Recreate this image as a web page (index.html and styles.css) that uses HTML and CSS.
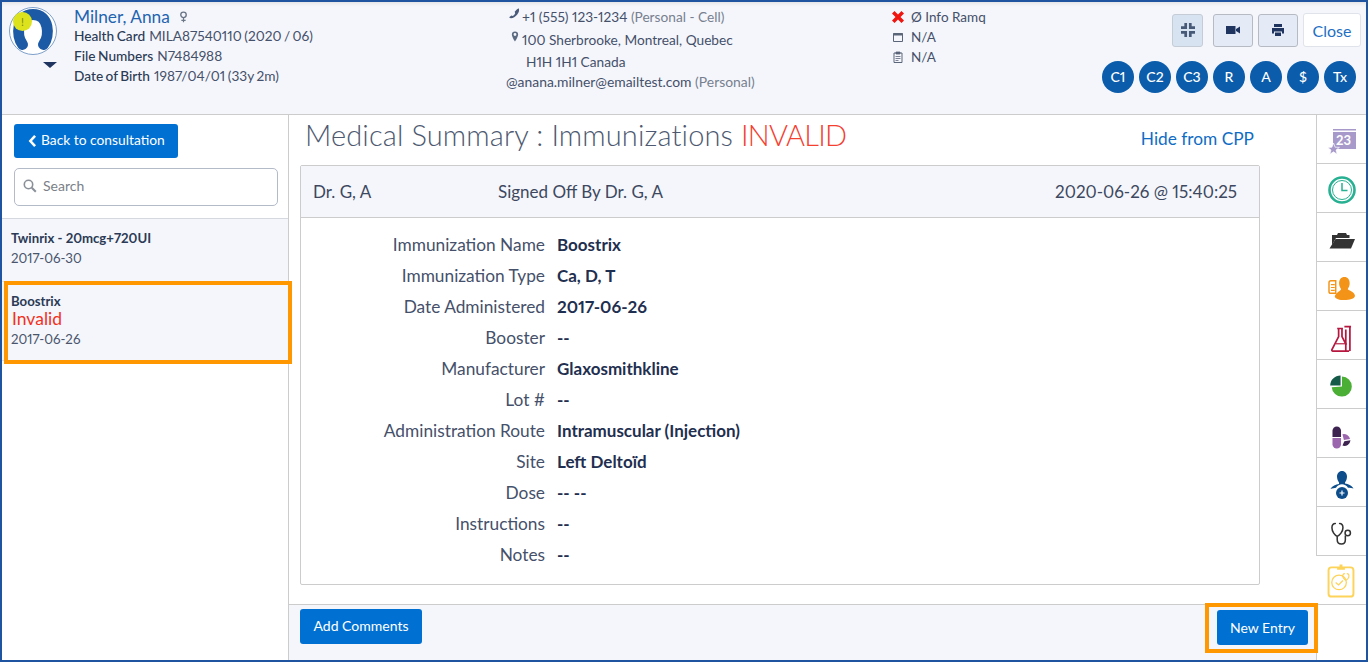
FILE: index.html
```html
<!DOCTYPE html>
<html lang="en">
<head>
<meta charset="utf-8">
<title>Medical Summary : Immunizations</title>
<link rel="stylesheet" href="styles.css">
</head>
<body>
<div class="frame">
  <header class="top">
    <div class="avatar-col">
      <div class="avatar">
        <svg viewBox="0 0 48 48" width="48" height="48"><circle cx="24" cy="24" r="23.500" fill="#fff" stroke="#7d9fc9"/><path d="M13.500 37.500C7 29 7.500 7.500 24 7.500S41 29 34.500 37.500" fill="none" stroke="#1d5aa6" stroke-width="11" stroke-linecap="round"/></svg>
        <span class="alert">!</span>
      </div>
      <span class="caret"></span>
    </div>
    <div class="patient">
      <div class="name">Milner, Anna <svg class="female" viewBox="0 0 10 14" width="9" height="12"><circle cx="5" cy="4.500" r="3.200" fill="none" stroke="#6b7687" stroke-width="1.600"/><path d="M5 8v5M2.500 11h5" stroke="#6b7687" stroke-width="1.400"/></svg></div>
      <div class="line"><b>Health Card</b> MILA87540110 (2020 / 06)</div>
      <div class="line"><b>File Numbers</b> N7484988</div>
      <div class="line"><b>Date of Birth</b> 1987/04/01 (33y 2m)</div>
    </div>
    <div class="contact">
      <div class="line"><svg class="ci" viewBox="0 0 12 12" width="11" height="11"><path d="M10.500 .3c1 1.700.5 4.500-1.500 6.800S4.400 11.200 2.200 11.200c-.9 0-1.600-.4-2-1l2.400-2 1.400.6c1.200-.7 2.200-1.900 2.800-3.200l-.6-1.500L8.500 1.500z" fill="#4a5a78"/></svg>+1 (555) 123-1234 <span class="muted">(Personal - Cell)</span></div>
      <div class="line addr"><svg class="ci pin" viewBox="0 0 10 14" width="8" height="11"><path d="M5 .5a4 4 0 0 1 4 4c0 3-4 9-4 9s-4-6-4-9a4 4 0 0 1 4-4zm0 2.200a1.800 1.800 0 1 0 0 3.600 1.800 1.800 0 0 0 0-3.600z" fill="#5c6a82"/></svg>100 Sherbrooke, Montreal, Quebec</div>
      <div class="line indent">H1H 1H1 Canada</div>
      <div class="line email">@anana.milner@emailtest.com <span class="muted">(Personal)</span></div>
    </div>
    <div class="ramq">
      <div class="rline"><svg viewBox="0 0 12 12" width="12" height="12"><path d="M0 2.500 2.500 0 6 3.500 9.500 0 12 2.500 8.500 6 12 9.500 9.500 12 6 8.500 2.500 12 0 9.500 3.500 6z" fill="#f0150f"/></svg><span>Ø Info Ramq</span></div>
      <div class="rline"><svg viewBox="0 0 12 12" width="12" height="12"><path d="M1.500 2.500h9v8h-9z" fill="none" stroke="#5a6578"/><path d="M1.500 2h9v2.500h-9z" fill="#5a6578"/></svg><span>N/A</span></div>
      <div class="rline"><svg viewBox="0 0 12 12" width="12" height="12"><path d="M2 2h8v9.500H2z" fill="none" stroke="#5a6578"/><path d="M4 1h4v2H4zM3.500 5.500h5M3.500 7.500h5M3.500 9.500h3" stroke="#5a6578" fill="#5a6578" stroke-width=".8"/></svg><span>N/A</span></div>
    </div>
    <div class="actions">
      <div class="tools">
        <button class="tool tool-on"><svg viewBox="0 0 14 14" width="14" height="14"><path d="M4.700 0V4.700H0M9.300 0V4.700H14M0 9.300H4.700V14M14 9.300H9.300V14" fill="none" stroke="#465a78" stroke-width="2.700"/></svg></button>
        <button class="tool"><svg viewBox="0 0 14 10" width="14" height="10"><path d="M0 1h9.500v8H0zM10 4l4-2.500v7L10 6z" fill="#1f3560"/></svg></button>
        <button class="tool"><svg viewBox="0 0 14 14" width="14" height="14"><path d="M3 1h8v3H3zM1 5h12v5.500h-2V8.500H3v2H1zM4 9.500h6V13H4z" fill="#1f3560"/></svg></button>
        <button class="close">Close</button>
      </div>
      <div class="circles">
        <span class="circle">C1</span><span class="circle">C2</span><span class="circle">C3</span><span class="circle">R</span><span class="circle">A</span><span class="circle">$</span><span class="circle">Tx</span>
      </div>
    </div>
  </header>

  <div class="body">
    <aside class="side">
      <div class="side-top">
        <button class="btn back"><svg viewBox="0 0 10 14" width="9" height="12"><path d="M8 1 2.500 7 8 13" fill="none" stroke="#fff" stroke-width="3"/></svg>Back to consultation</button>
        <div class="search"><svg viewBox="0 0 14 14" width="14" height="14"><circle cx="5.500" cy="5.500" r="4.200" fill="none" stroke="#8a8f98" stroke-width="1.600"/><path d="m8.800 8.800 4 4" stroke="#8a8f98" stroke-width="2"/></svg><span>Search</span></div>
      </div>
      <ul class="list">
        <li class="item">
          <div class="item-title">Twinrix - 20mcg+720UI</div>
          <div class="item-date">2017-06-30</div>
        </li>
        <li class="item item-on">
          <div class="item-title">Boostrix</div>
          <div class="item-invalid">Invalid</div>
          <div class="item-date">2017-06-26</div>
          <span class="mark"></span>
        </li>
      </ul>
    </aside>

    <main class="main">
      <div class="content">
        <div class="title-row">
          <h1 class="title">Medical Summary : Immunizations <span class="inv">INVALID</span></h1>
          <a class="hide">Hide from CPP</a>
        </div>
        <section class="card">
          <div class="card-head">
            <span class="who">Dr. G, A</span>
            <span class="signed">Signed Off By Dr. G, A</span>
            <span class="when">2020-06-26 @ 15:40:25</span>
          </div>
          <dl class="rows">
            <dt>Immunization Name</dt><dd>Boostrix</dd>
            <dt>Immunization Type</dt><dd>Ca, D, T</dd>
            <dt>Date Administered</dt><dd>2017-06-26</dd>
            <dt>Booster</dt><dd>--</dd>
            <dt>Manufacturer</dt><dd>Glaxosmithkline</dd>
            <dt>Lot #</dt><dd>--</dd>
            <dt>Administration Route</dt><dd>Intramuscular (Injection)</dd>
            <dt>Site</dt><dd>Left Deltoïd</dd>
            <dt>Dose</dt><dd>-- --</dd>
            <dt>Instructions</dt><dd>--</dd>
            <dt>Notes</dt><dd>--</dd>
          </dl>
        </section>
      </div>
      <footer class="foot">
        <button class="btn add">Add Comments</button>
        <button class="btn new">New Entry<span class="mark mark-new"></span></button>
      </footer>
    </main>

    <nav class="rail">
      <div class="cell"><svg viewBox="0 0 28 26" width="28" height="26"><path d="M5 0h23v1.500H5zM5 3h23v17H5z" fill="#a79acb"/><path d="m5.500 14 1.600 4.200 4.300.2-3.400 2.700 1.200 4.200L5.500 22.800l-3.700 2.500L3 21.100-.4 18.400l4.300-.2z" fill="#a79acb" stroke="#fff" stroke-width=".7"/><text x="15.500" y="15.500" class="cal">23</text></svg></div>
      <div class="cell cell-clock"><svg viewBox="0 0 28 28" width="28" height="28"><circle cx="14" cy="14" r="12.500" fill="none" stroke="#27b091" stroke-width="2.600"/><circle cx="14" cy="14" r="9.500" fill="none" stroke="#27b091" stroke-width="1"/><path d="M14 7v7.500h5.500" fill="none" stroke="#27b091" stroke-width="1.500"/></svg></div>
      <div class="cell"><svg viewBox="0 0 26 18" width="26" height="18"><path d="M3 4h5l1-2h8l1 2h2.500v3H7L3 14z" fill="#333"/><path d="M6.500 8H26l-4 9.500H.5z" fill="#333"/></svg></div>
      <div class="cell"><svg viewBox="0 0 28 26" width="27" height="25"><path d="M1 7c0-1 1-2 2-2h5v13H3c-1 0-2-1-2-2z" fill="none" stroke="#f39317" stroke-width="1.500"/><path d="M3 9h4M3 12h4M3 15h4" stroke="#f39317" stroke-width="1.200"/><path d="M17 1c3.500 0 5.500 2.800 5.500 6.500 0 2.500-1 4.500-2 6 0 1.500 7 2.500 7.500 7 0 3-6 4.500-11 4.500S8 24 7 21.500c.5-4.500 6.500-5.500 6.500-8-1-1.500-2-3.500-2-6C11.500 3.800 13.500 1 17 1z" fill="#f39317"/></svg></div>
      <div class="cell cell-low"><svg viewBox="0 0 22 28" width="21" height="28"><path d="M14 1h7M19.800 1v25.500M15.500 4v22.500" stroke="#b5173f" stroke-width="1.800" fill="none"/><path d="M6.500 3h6M8 3v8.500L1 25c-.3 1 0 1.700 1 1.700h17" fill="none" stroke="#b5173f" stroke-width="1.800"/><path d="M11.500 3v8.500L16 20" fill="none" stroke="#b5173f" stroke-width="1.800"/><path d="M5 19h10" stroke="#b5173f" stroke-width="1.200"/></svg></div>
      <div class="cell"><svg viewBox="0 0 24 24" width="23" height="23"><path d="M11 .5v10.500H.2C.2 5 5 .5 11 .5z" fill="#155a48"/><path d="M12.500 1.500a10.500 10.500 0 1 1-10.700 11.200l10.700-.6z" fill="#4caf35"/></svg></div>
      <div class="cell cell-low"><svg viewBox="0 0 20 24" width="19" height="23"><path d="M.5 5a4.500 4.500 0 0 1 9 0v6.500h-9z" fill="#3c2350"/><path d="M.5 12.500h9V19a4.500 4.500 0 0 1-9 0z" fill="#9b66ad"/><path d="M11 8.500a6.500 6.500 0 0 1 8 5l-6.500 1z" fill="#9b66ad"/><path d="M19.500 15a6.500 6.500 0 0 1-8.500 5.500l2-4.500z" fill="#3c2350"/></svg></div>
      <div class="cell"><svg viewBox="0 0 24 30" width="24" height="30"><path d="M12 1c3 0 5 2.500 5 5.500 0 2.500-1 4.500-2 6v1c3 .5 7 2 8.500 5-2-.8-4-1-5.500-.8a7 7 0 0 0-12 0C4.500 18 2.500 18.200.5 19c1.500-3 5.500-4.500 8.500-5v-1.500c-1-1.500-2-3.500-2-6C7 3.500 9 1 12 1z" fill="#0d4d8c"/><circle cx="12" cy="23" r="6" fill="#0d4d8c"/><path d="M9.500 23h5M12 20.500v5" stroke="#fff" stroke-width="1.200"/></svg></div>
      <div class="cell"><svg viewBox="0 0 24 24" width="24" height="23"><path d="M5 1.500C3 1.500 1.500 3 1.500 6c0 4 3 8 5.500 9 2.500-1 6-5 6-9 0-3-1.500-4.500-3.500-4.500" fill="none" stroke="#333" stroke-width="1.600" stroke-linecap="round"/><path d="M7 15v3.500c0 3 2 4.500 4.500 4.500s4-2 4-4.500V14" fill="none" stroke="#333" stroke-width="1.600"/><circle cx="18" cy="11.500" r="2.800" fill="none" stroke="#333" stroke-width="1.600"/></svg></div>
      <div class="cell cell-last"><svg viewBox="0 0 28 36" width="28" height="35"><rect x="1.200" y="4.500" width="25.600" height="30" rx="3" fill="none" stroke="#fdd35a" stroke-width="2"/><path d="M10 4.500h8V7h-8zM12.500 1.500h3v3h-3z" fill="#fdd35a"/><circle cx="12" cy="20" r="7.500" fill="none" stroke="#fdd35a" stroke-width="1.300"/><path d="m8.500 20 3 2.500 4.500-4.500" fill="none" stroke="#fdd35a" stroke-width="1.300"/><path d="M18 11c-2 0-2.500 1.500-2 3.500.5 1.500 2 3 3 3.500 1-.5 2.500-2 3-3.500.5-2 0-3.500-2-3.500" fill="none" stroke="#fdd35a" stroke-width="1.200"/></svg></div>
      <div class="rail-foot"></div>
    </nav>
  </div>
</div>
</body>
</html>
```
FILE: styles.css
```css
* { box-sizing: border-box; }
html, body { margin: 0; height: 100%; }
body { font-family: "Lato", "Open Sans", sans-serif; font-variant-numeric: proportional-nums; color: #2b3a55; background: #fff; overflow: hidden; }
.frame { width: 1368px; height: 662px; border: 2px solid #1f55a0; display: flex; flex-direction: column; }

.top { height: 113px; flex: none; display: flex; background: #f4f6fb; border-bottom: 1px solid #ccc; box-shadow: inset 0 4px 4px -3px #ddd; font-size: 13.700px; }
.avatar-col { width: 72px; padding: 5px 0 0 7px; flex: none; }
.avatar { width: 48px; height: 48px; position: relative; }
.alert { position: absolute; left: 4px; top: 5px; width: 19px; height: 19px; border-radius: 50%; background: #dce31c; color: #7f8a20; font-size: 11px; text-align: center; line-height: 19px; }
.caret { display: block; margin: 7px 0 0 34px; width: 0; height: 0; border-left: 7px solid transparent; border-right: 7px solid transparent; border-top: 6px solid #1f3560; }
.patient { width: 431px; flex: none; padding-top: 6px; }
.patient .line { word-spacing: -1px; }
.patient .line b { margin-right: 1.500px; }
.name { font-size: 17.300px; color: #1f64b0; line-height: 18px; }
.female { margin-left: 5px; vertical-align: 0; }
.line { line-height: 20px; color: #45506a; }
.line b { font-weight: 500; color: #2b3a55; }
.contact { width: 387px; flex: none; padding-top: 4px; }
.contact .line { line-height: 22px; white-space: nowrap; padding-left: 4px; }
.contact .addr { margin-top: 1px; }
.ci { margin-right: 2px; vertical-align: 3px; }
.pin { margin-left: 2px; margin-right: 3px; }
.contact .indent { padding-left: 21px; }
.contact .email { padding-left: 1px; line-height: 18px; font-size: 13.900px; }
.muted { color: #77808f; }
.ramq { width: 200px; flex: none; padding-top: 4px; }
.rline { display: flex; align-items: center; gap: 7px; height: 20px; color: #45506a; font-size: 13.500px; }
.rline:first-child { height: 21px; }
.rline svg { flex: none; }
.actions { flex: 1; display: flex; flex-direction: column; align-items: flex-end; padding: 11px 5px 0 0; gap: 14px; }
.tools { display: flex; gap: 5px; align-items: center; }
.tool { width: 40px; height: 33px; display: flex; align-items: center; justify-content: center; border: 1px solid #b6bac2; border-radius: 3px; background: #e4ebf7; padding: 0; }
.tool-on { width: 31px; margin-right: 5px; background: #d8e3f1; border-color: #c5ccd6; }
.close { width: 58px; height: 34px; border: 1px solid #e0e3ea; border-radius: 3px; background: #fff; color: #1f70c4; font: inherit; font-size: 16px; padding: 0; }
.circles { display: flex; gap: 5px; margin-right: 5px; }
.circle { width: 32px; height: 32px; border-radius: 50%; background: #0b5cab; color: #fff; text-align: center; line-height: 32px; font-size: 14px; font-weight: 500; }

.body { flex: 1; display: flex; min-height: 0; }
.side { width: 287px; flex: none; border-right: 1px solid #ccc; }
.side-top { padding: 9px 10px 12px 12px; display: flex; flex-direction: column; gap: 10px; align-items: flex-start; border-bottom: 1px solid #d5d8de; }
.btn { height: 35px; border: 0; border-radius: 3px; background: #0070d2; color: #fff; font: inherit; font-size: 14px; padding: 0 0 2px; display: inline-flex; align-items: center; justify-content: center; }
.back { width: 164px; height: 34px; padding: 0 0 4px 14px; gap: 4px; white-space: nowrap; justify-content: flex-start; font-size: 13.800px; }
.back svg { margin-top: 4px; }
.search { width: 264px; height: 38px; border: 1px solid #b3bac8; border-radius: 5px; background: #fff; display: flex; align-items: center; gap: 6px; padding: 0 0 4px 8px; color: #7b7f88; font-size: 14px; }
.search svg { margin-top: 2px; }
.list { list-style: none; margin: 0; padding: 0; }
.item { background: #f4f6fb; padding: 11px 9px 0; border-bottom: 1px solid #dcdfe6; height: 63px; position: relative; }
.item-on { height: 79px; }
.item-title { font-weight: 700; font-size: 13.200px; color: #2b3a55; line-height: 17px; }
.item-date { color: #4a556c; font-size: 13.300px; line-height: 20px; margin-top: 1px; }
.item-invalid { color: #f2301c; font-size: 17.500px; line-height: 18px; padding-left: 1px; }
.mark { position: absolute; left: 2px; right: -4px; top: -1px; bottom: -4px; border: 4px solid #ff9800; pointer-events: none; }

.main { flex: 1; min-width: 0; display: flex; flex-direction: column; }
.content { flex: 1; padding: 0 56px 0 11px; }
.title-row { display: flex; justify-content: space-between; align-items: flex-start; height: 50px; padding: 0 6px 0 5px; }
.title { margin: 0; font-size: 29px; font-weight: 300; letter-spacing: .13px; color: #4d5970; line-height: 40px; }
.inv { color: #f4402f; letter-spacing: -.7px; }
.hide { color: #0f6cc4; font-size: 17.300px; line-height: 22px; margin-top: 13px; }
.card { border: 1px solid #ccc; border-radius: 2px; height: 420px; }
.card-head { height: 52px; background: #f4f6fb; border-bottom: 1px solid #ccc; display: flex; align-items: center; padding: 0 22px 0 12px; font-size: 17px; color: #3d4860; }
.who { width: 185px; }
.when { margin-left: auto; }
.rows { margin: 11px 0 0; display: grid; grid-template-columns: 244px 1fr; column-gap: 12px; grid-auto-rows: 31px; font-size: 17px; align-items: center; }
.rows dt { text-align: right; color: #45506a; font-size: 17.300px; }
.rows dd { margin: 0; font-weight: 700; color: #1f2f50; }

.foot { height: 56px; flex: none; background: #f4f6fb; border-top: 1px solid #ccc; display: flex; justify-content: space-between; align-items: flex-start; padding: 4px 8px 0 11px; }
.add { width: 122px; }
.new { position: relative; width: 91px; padding: 0; margin-top: 1px; }
.mark-new { left: -12px; right: -10px; top: -7px; bottom: -8px; }

.rail { width: 50px; flex: none; display: flex; flex-direction: column; }
.cell { height: 49px; flex: none; display: flex; align-items: center; justify-content: center; border-left: 1px solid #ccc; border-bottom: 1px solid #ccc; background: #fff; padding-top: 5px; }
.cell-clock { padding-top: 3px; }
.cell-low { padding-top: 8px; }
.cell-last { border-left: 0; padding-top: 0; }
.rail-foot { flex: 1; border-left: 1px solid #ccc; }
.cal { font-family: "Lato", sans-serif; font-size: 13px; font-weight: 700; fill: #fff; text-anchor: middle; }
```
